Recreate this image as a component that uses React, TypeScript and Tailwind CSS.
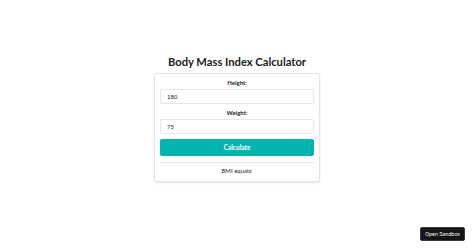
import React, { useState } from 'react';

const Field: React.FC<{ label: string; value: string; onChange: (v: string) => void }> = ({ label, value, onChange }) => (
  <div className="mb-[5px]">
    <label className="block text-center text-[6px] font-bold leading-[8px] text-[#212121] mb-[2px]">{label}</label>
    <input
      className="block w-full h-[15px] px-[6px] text-[6px] leading-[8px] text-[#212121] border border-[#e6e6e6] rounded-[2px] outline-none"
      value={value}
      onChange={e => onChange(e.target.value)}
    />
  </div>
);

export default function App() {
  const [height, setHeight] = useState('180');
  const [weight, setWeight] = useState('75');
  const [bmi, setBmi] = useState('');

  const calculate = () => {
    const h = parseFloat(height) / 100;
    const w = parseFloat(weight);
    if (h > 0 && w > 0) setBmi((w / (h * h)).toFixed(2));
  };

  return (
    <div className="relative h-[248px] w-full bg-white font-['Lato',sans-serif] text-[#212121]">
      <div className="pt-[53px]">
        <h1 className="text-center text-[11.2px] font-bold leading-[17px] mb-[3px]">Body Mass Index Calculator</h1>
        <div className="mx-auto w-[166px] border border-[#e4e4e4] rounded-[2px] shadow-[0_1px_2px_0_rgba(34,36,38,0.12)] px-[5px] pt-[5px] pb-[6px]">
          <Field label="Height:" value={height} onChange={setHeight} />
          <Field label="Weight:" value={weight} onChange={setWeight} />
          <button
            onClick={calculate}
            className="block w-full h-[17px] bg-[#00b5ad] rounded-[2px] text-white text-[6.5px] font-bold leading-[17px]"
          >
            Calculate
          </button>
          <div className="mt-[6px] border-t border-[#e8e8e8]" />
          <p className="mt-[4px] text-center text-[6px] leading-[8px]">BMI equals: {bmi}</p>
        </div>
      </div>
      <button className="absolute right-[9px] bottom-[7px] h-[14px] px-[4px] bg-[#151515] border border-[#3a3a3a] rounded-[2px] text-white text-[5px] leading-[12px] font-['Inter',sans-serif]">
        Open Sandbox
      </button>
    </div>
  );
}
